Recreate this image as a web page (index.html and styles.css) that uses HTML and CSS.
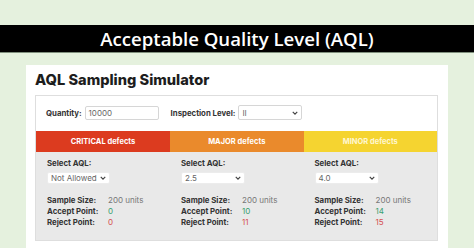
FILE: index.html
```html
<!DOCTYPE html>
<html>
<head>
<meta charset="utf-8">
<link rel="stylesheet" href="styles.css">
</head>
<body>
<div class="topbar">Acceptable Quality Level (AQL)</div>
<div class="card">
  <h1 class="title">AQL Sampling Simulator</h1>
  <div class="box">
    <div class="controls">
      <label class="lbl">Quantity:</label>
      <div class="input qty">10000</div>
      <label class="lbl insp">Inspection Level:</label>
      <div class="input sel level"><span>II</span><svg class="chev" viewBox="0 0 8 5" width="6" height="4"><path d="M1 1l3 3 3-3" fill="none" stroke="#444" stroke-width="1.6"/></svg></div>
    </div>
    <div class="heads">
      <div class="head critical">CRITICAL defects</div>
      <div class="head major">MAJOR defects</div>
      <div class="head minor">MINOR defects</div>
    </div>
    <div class="cols">
      <div class="col">
        <div class="lbl">Select AQL:</div>
        <div class="input sel aql"><span>Not Allowed</span><svg class="chev" viewBox="0 0 8 5" width="6" height="4"><path d="M1 1l3 3 3-3" fill="none" stroke="#444" stroke-width="1.6"/></svg></div>
        <div class="stats">
          <div class="lbl">Sample Size:</div><div class="val">200 units</div>
          <div class="lbl">Accept Point:</div><div class="val ok">0</div>
          <div class="lbl">Reject Point:</div><div class="val bad">0</div>
        </div>
      </div>
      <div class="col">
        <div class="lbl">Select AQL:</div>
        <div class="input sel aql wide"><span>2.5</span><svg class="chev" viewBox="0 0 8 5" width="6" height="4"><path d="M1 1l3 3 3-3" fill="none" stroke="#444" stroke-width="1.6"/></svg></div>
        <div class="stats">
          <div class="lbl">Sample Size:</div><div class="val">200 units</div>
          <div class="lbl">Accept Point:</div><div class="val ok">10</div>
          <div class="lbl">Reject Point:</div><div class="val bad">11</div>
        </div>
      </div>
      <div class="col">
        <div class="lbl">Select AQL:</div>
        <div class="input sel aql wide"><span>4.0</span><svg class="chev" viewBox="0 0 8 5" width="6" height="4"><path d="M1 1l3 3 3-3" fill="none" stroke="#444" stroke-width="1.6"/></svg></div>
        <div class="stats">
          <div class="lbl">Sample Size:</div><div class="val">200 units</div>
          <div class="lbl">Accept Point:</div><div class="val ok">14</div>
          <div class="lbl">Reject Point:</div><div class="val bad">15</div>
        </div>
      </div>
    </div>
  </div>
</div>
</body>
</html>
```
FILE: styles.css
```css
* { box-sizing: border-box; }
html, body { margin: 0; padding: 0; }
body {
  width: 474px;
  height: 248px;
  overflow: hidden;
  background: #e5f1de;
  font-family: "Open Sans", "DejaVu Sans", sans-serif;
}
.topbar {
  margin-top: 25px;
  height: 28px;
  background: #000;
  color: #fff;
  font-family: "Open Sans", sans-serif;
  font-weight: 600;
  font-size: 18.6px;
  line-height: 28px;
  text-align: center;
  border-bottom: 1px solid #7f8f7c;
}
.card {
  margin: 12px 0 0 26px;
  width: 422px;
  height: 183px;
  background: #fff;
  padding: 0 10px 0 9px;
}
.title {
  margin: 0;
  height: 30px;
  padding-top: 6px;
  font-family: Inter, "DejaVu Sans", sans-serif;
  font-weight: 800;
  font-size: 14.6px;
  line-height: 18px;
  color: #1d1d1d;
}
.box {
  border: 1px solid #dedede;
  width: 403px;
  height: 146px;
  display: flex;
  flex-direction: column;
}
.controls {
  height: 35px;
  display: flex;
  align-items: center;
  padding-left: 10px;
  padding-bottom: 2px;
}
.lbl {
  font-family: Inter, "DejaVu Sans", sans-serif;
  font-weight: 700;
  font-size: 7.8px;
  color: #333;
}
.input {
  background: #fff;
  border: 1px solid #d6d6d6;
  border-radius: 2px;
  font-size: 8px;
  color: #666;
  font-family: Inter, "DejaVu Sans", sans-serif;
  height: 14px;
  line-height: 12px;
  padding: 0 3px;
}
.qty { width: 74px; margin-left: 3px; }
.insp { margin-left: 12px; }
.sel {
  display: flex;
  align-items: center;
  justify-content: space-between;
}
.level { width: 64px; margin-left: 3px; height: 15px; }
.chev { display: block; }
.heads {
  display: flex;
  height: 21px;
}
.head {
  flex: 1;
  color: #fff;
  font-family: Inter, "DejaVu Sans", sans-serif;
  font-weight: 700;
  font-size: 7.5px;
  display: flex;
  align-items: center;
  justify-content: center;
}
.critical { background: #dc3b1f; flex: 0 0 134px; }
.major { background: #ea8a2c; }
.minor { background: #f5d430; color: #fff7d0; }
.cols {
  flex: 1;
  display: flex;
  background: #e9e9e9;
}
.col {
  flex: 1;
  padding: 6px 0 0 11px;
}
.col:first-child { flex: 0 0 134px; }
.aql {
  width: 63px;
  margin-top: 4px;
  height: 12px;
  border-color: #ececec;
  line-height: 10px;
}
.aql.wide { width: 64px; }
.stats {
  margin-top: 11px;
  display: grid;
  grid-template-columns: 61px auto;
  row-gap: 1px;
  line-height: 10px;
}
.val {
  font-family: Inter, "DejaVu Sans", sans-serif;
  font-size: 8px;
  color: #777;
}
.ok { color: #3aa070; }
.bad { color: #d55050; }
```
